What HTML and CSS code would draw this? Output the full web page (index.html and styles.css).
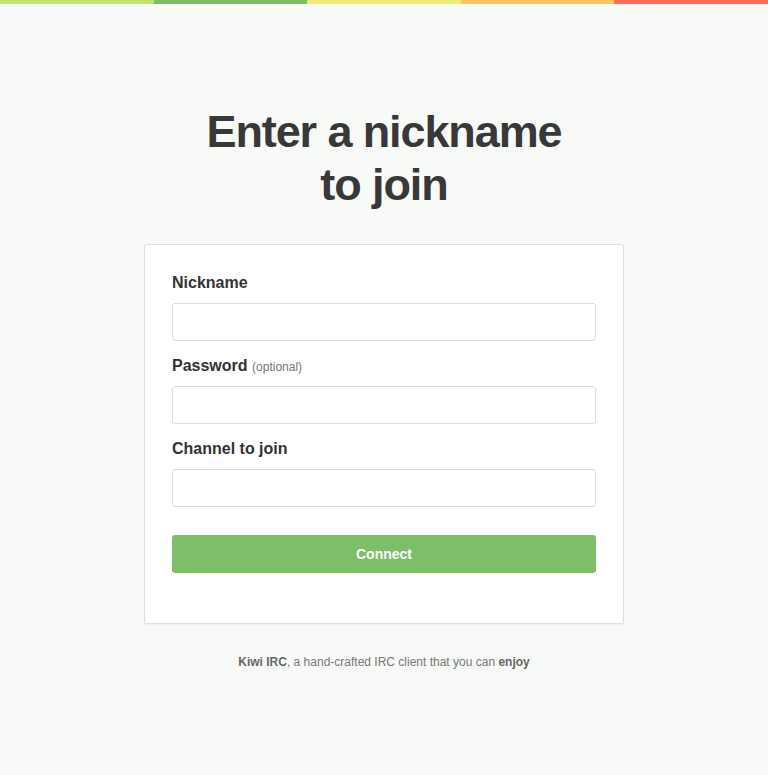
FILE: index.html
```html
<!DOCTYPE html>
<html lang="en">
<head>
    <meta charset="UTF-8">
    <meta name="viewport" content="width=device-width, initial-scale=1.0">
    <title>Kiwi IRC</title>
    <link rel="stylesheet" href="styles.css">
</head>
<body>

    <!-- Barra de colores -->
    <div class="color-bar">
        <span class="c1"></span>
        <span class="c2"></span>
        <span class="c3"></span>
        <span class="c4"></span>
        <span class="c5"></span>
    </div>

    <div class="welcome">
        <h2 class="welcome-title">Enter a nickname<br>to join</h2>

        <form class="welcome-card" onsubmit="return false">
            <label class="field">
                <span class="field-label">Nickname</span>
                <input type="text" class="field-input">
            </label>
            <label class="field">
                <span class="field-label">Password <small>(optional)</small></span>
                <input type="password" class="field-input">
            </label>
            <label class="field">
                <span class="field-label">Channel to join</span>
                <input type="text" class="field-input">
            </label>
            <button type="submit" class="connect-btn">Connect</button>
        </form>

        <p class="footer">
            <b>Kiwi IRC</b>, a hand-crafted IRC client that you can <b>enjoy</b>
        </p>
    </div>

</body>
</html>
```

FILE: styles.css
```css
/* Estilos básicos */
body {
    font-family: "Liberation Sans", Arial, sans-serif;
    background-color: #f8faf7;
    color: #333;
    margin: 0;
    padding: 0;
}

/* Barra de colores */
.color-bar {
    display: flex;
    height: 4px;
}

.color-bar span {
    flex: 1;
}

.c1 { background-color: #c2e070; }
.c2 { background-color: #7fbe69; }
.c3 { background-color: #eeeb78; }
.c4 { background-color: #f9c560; }
.c5 { background-color: #fa6e59; }

.welcome {
    display: flex;
    flex-direction: column;
    align-items: center;
    padding-top: 101px;
}

.welcome-title {
    margin: 0 0 33px;
    font-size: 45px;
    line-height: 53px;
    letter-spacing: -1.1px;
    font-weight: bold;
    text-align: center;
    color: #383838;
}

/* Tarjeta del formulario */
.welcome-card {
    box-sizing: border-box;
    width: 480px;
    padding: 27px 27px 50px;
    background-color: #fff;
    border: 1px solid #dcdcdc;
    border-radius: 2px;
    box-shadow: 0 1px 2px rgba(0, 0, 0, 0.05);
    display: flex;
    flex-direction: column;
}

.field {
    display: flex;
    flex-direction: column;
    margin-bottom: 14px;
}

.field-label {
    font-size: 16px;
    line-height: 22px;
    height: 22px;
    font-weight: bold;
    color: #333;
    margin-bottom: 9px;
}

.field-label small {
    font-size: 12px;
    line-height: 1;
    font-weight: normal;
    color: #777;
}

.field-input {
    box-sizing: border-box;
    height: 38px;
    padding: 0 10px;
    border: 1px solid #ddd;
    border-radius: 3px;
    background-color: #fff;
    font-family: inherit;
    font-size: 14px;
    outline: none;
}

.connect-btn {
    margin-top: 14px;
    height: 38px;
    border: none;
    border-radius: 3px;
    background-color: #7ebe69;
    color: #fff;
    font-family: inherit;
    font-size: 14px;
    font-weight: bold;
    cursor: pointer;
}

.footer {
    margin: 30px 0 0;
    font-size: 12px;
    line-height: 16px;
    color: #777;
}

.footer b {
    color: #666;
}
```
